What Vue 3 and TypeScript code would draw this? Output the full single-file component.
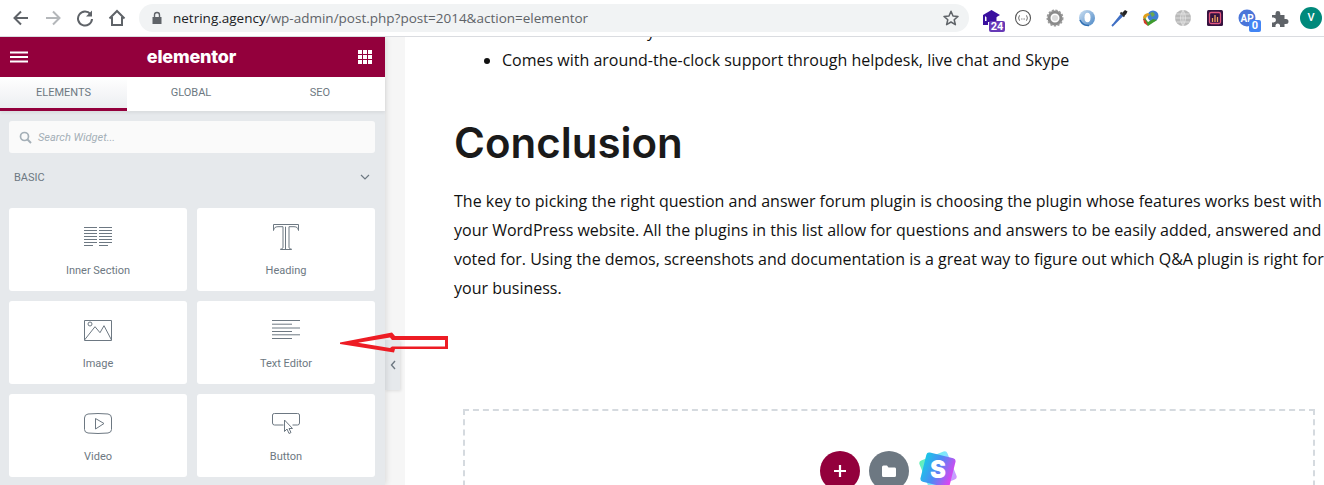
<script setup lang="ts">
interface Widget {
  title: string
  paths: string[]
}

const hLines = (ys: number[], x1: number, x2: number, shortEvery: number, shortX: number): string =>
  ys.map((y, i) => `M${x1} ${y}H${(i + 1) % shortEvery === 0 ? shortX : x2}`).join('')

const widgets: Widget[] = [
  {
    title: 'Inner Section',
    paths: [
      hLines([9.5, 12.5, 15.5, 18.5, 21.5, 24.5, 27.5], 4, 17, 7, 13),
      hLines([9.5, 12.5, 15.5, 18.5, 21.5, 24.5, 27.5], 19, 32, 7, 28),
    ],
  },
  {
    title: 'Heading',
    paths: [
      'M5.5 6.5H30.5V12.5C30 10 29 8.7 26 8.7H21V29C21 30.5 22 31 23.5 31V31.5H12.5V31C14 31 15 30.5 15 29V8.7H10C7 8.7 6 10 5.5 12.5Z',
      'M17.5 8.7V31',
    ],
  },
  {
    title: 'Image',
    paths: [
      'M4.5 9.5H31.5V29.5H4.5Z',
      'M4.5 29L15 15.7L20 21.7L24 14.7L31.5 29',
      'M12 13a2 2 0 1 1-4 0a2 2 0 1 1 4 0Z',
    ],
  },
  {
    title: 'Text Editor',
    paths: [hLines([9.5, 13.2, 17, 20.5, 23.8, 27.5], 4, 32, 2, 24)],
  },
  {
    title: 'Video',
    paths: [
      'M8 10Q18 9 28 10Q31.5 10.5 31.5 14V25.5Q31.5 28.5 28 29Q18 30 8 29Q4.5 28.5 4.5 25.5V14Q4.5 10.5 8 10Z',
      'M15.5 14.5L24 19.5L15.5 25Z',
    ],
  },
  {
    title: 'Button',
    paths: [
      'M15.5 21H6.5Q4.5 21 4.5 19V11Q4.5 9.5 6.5 9.5H29.5Q31.5 9.5 31.5 11V19Q31.5 21 29.5 21H24.5',
      'M16.5 16V27.5L19 25L21 29.5L23 28.5L21 24.5H24.5Z',
    ],
  },
]

const tabs = ['Elements', 'Global', 'SEO']
</script>

<template>
  <div class="page">
    <header class="toolbar">
      <button class="nav">
        <svg width="18" height="18" viewBox="0 0 18 18"><path d="M16 9H3M9 2.5L2.5 9L9 15.5" fill="none" stroke="#5f6368" stroke-width="2" /></svg>
      </button>
      <button class="nav">
        <svg width="18" height="18" viewBox="0 0 18 18"><path d="M2 9H15M9 2.5L15.5 9L9 15.5" fill="none" stroke="#b4b7ba" stroke-width="2" /></svg>
      </button>
      <button class="nav">
        <svg width="18" height="18" viewBox="0 0 18 18"><path d="M14.5 5.2A7 7 0 1 0 16 10" fill="none" stroke="#5f6368" stroke-width="2" /><path d="M16 1.5V7.5H10Z" fill="#5f6368" /></svg>
      </button>
      <button class="nav">
        <svg width="18" height="18" viewBox="0 0 18 18"><path d="M1.5 9.5L9 2L16.5 9.5M4 8V16H14V8" fill="none" stroke="#5f6368" stroke-width="2" /></svg>
      </button>
      <div class="omnibox">
        <svg class="lock" width="12" height="14" viewBox="0 0 12 14"><path d="M1.5 6H10.5V13H1.5Z" fill="#5f6368" /><path d="M3.5 6V4A2.5 2.5 0 0 1 8.5 4V6" fill="none" stroke="#5f6368" stroke-width="1.4" /></svg>
        <span class="url"><span class="host">netring.agency</span>/wp-admin/post.php?post=2014&amp;action=elementor</span>
        <svg class="star" width="18" height="18" viewBox="0 0 18 18"><path d="M9 2.2L11 7L16 7.4L12.2 10.7L13.4 15.7L9 13L4.6 15.7L5.8 10.7L2 7.4L7 7Z" fill="none" stroke="#5f6368" stroke-width="1.5" stroke-linejoin="round" /></svg>
      </div>

      <div class="ext">
        <svg width="32" height="32" viewBox="0 0 32 32">
          <path d="M8 13L16.5 8L25 13L16.5 18Z" fill="#3a109f" />
          <path d="M11.5 14H21.5V20H11.5Z" fill="#3a109f" />
          <path d="M8 13H10V19H13V23H8Z" fill="#3a109f" />
        </svg>
        <span class="ext-badge purple">24</span>
      </div>
      <div class="ext">
        <svg width="32" height="32" viewBox="0 0 32 32">
          <circle cx="16" cy="16" r="7.5" fill="#fff" stroke="#555" stroke-width="1.1" />
          <path d="M13 13.5Q11.8 13.5 12 15Q12 16 11.3 16Q12 16 12 17Q11.8 18.5 13 18.5M19 13.5Q20.2 13.5 20 15Q20 16 20.7 16Q20 16 20 17Q20.2 18.5 19 18.5" fill="none" stroke="#555" stroke-width=".8" />
          <path d="M14.3 17H15.1M15.7 17H16.5M17.1 17H17.9" stroke="#555" stroke-width=".9" />
        </svg>
      </div>
      <div class="ext">
        <svg width="32" height="32" viewBox="0 0 32 32">
          <circle cx="16" cy="16" r="6" fill="none" stroke="#8a8a8a" stroke-width="3" />
          <circle cx="16" cy="16" r="7.6" fill="none" stroke="#9a9a9a" stroke-width="1.8" stroke-dasharray="2.2 1.4" />
          <circle cx="16" cy="16" r="3" fill="#dcdcdc" />
        </svg>
      </div>
      <div class="ext">
        <svg width="32" height="32" viewBox="0 0 32 32">
          <defs>
            <linearGradient id="swirl" x1="0" y1="0" x2="1" y2="1"><stop offset="0" stop-color="#cfe2f3" /><stop offset="1" stop-color="#4a86c5" /></linearGradient>
          </defs>
          <circle cx="16" cy="16" r="8" fill="url(#swirl)" />
          <ellipse cx="16.5" cy="15.5" rx="3" ry="4.8" fill="#fff" />
          <path d="M9 18Q12 24 18 23.5" fill="none" stroke="#2f6fb3" stroke-width="1.5" />
        </svg>
      </div>
      <div class="ext">
        <svg width="32" height="32" viewBox="0 0 32 32">
          <path d="M10 23L9 24L19 14L18 13Z" fill="#3f6fc4" stroke="#3f6fc4" stroke-width="1.8" />
          <path d="M17.5 10.5L21.5 14.5" stroke="#333" stroke-width="2" />
          <path d="M19 11L22 8L24.5 9.5L23 12.5L21 13.5Z" fill="#222" />
        </svg>
      </div>
      <div class="ext">
        <svg width="32" height="32" viewBox="0 0 32 32">
          <circle cx="18" cy="14" r="5.5" fill="#3f7fd1" />
          <path d="M15 11L18 10L20 13L17 15Z" fill="#6aa84f" />
          <path d="M8 16Q8 12 13 11L15 13Q11 14 11 17Z" fill="#e1a11c" />
          <path d="M8 17L13 24L22 18L18 17L13 20L10 16Z" fill="#3f9b2d" />
          <path d="M8 16L9 21L13 24L11 19Z" fill="#d23b2a" />
        </svg>
      </div>
      <div class="ext">
        <svg width="32" height="32" viewBox="0 0 32 32">
          <circle cx="16" cy="16" r="8" fill="#b9b9b9" />
          <path d="M8 16H24M9.5 12H22.5M9.5 20H22.5M16 8V24M16 8Q11 16 16 24M16 8Q21 16 16 24" fill="none" stroke="#e6e6e6" stroke-width=".8" />
        </svg>
      </div>
      <div class="ext">
        <svg width="32" height="32" viewBox="0 0 32 32">
          <rect x="8" y="8" width="16" height="16" rx="1.5" fill="#35123f" />
          <rect x="10.5" y="10.5" width="11" height="11" rx="1.5" fill="none" stroke="#e2567f" stroke-width="1.3" />
          <path d="M13.5 20V16M16 20V13M18.5 20V15" stroke="#f2a15f" stroke-width="1.3" />
        </svg>
      </div>
      <div class="ext">
        <svg width="32" height="32" viewBox="0 0 32 32">
          <circle cx="16" cy="16" r="8.5" fill="#4a75d9" />
          <text x="16" y="19.5" text-anchor="middle" class="ap">AP</text>
        </svg>
        <span class="ext-badge blue">0</span>
      </div>
      <div class="ext">
        <svg width="32" height="32" viewBox="0 0 32 32">
          <path d="M9 13H12.5V11.5A2.4 2.4 0 0 1 17.3 11.5V13H21.5V17H23A2.4 2.4 0 0 1 23 22H21.5V25H17V23.2A2.3 2.3 0 0 0 12.5 23.2V25H9V20.5H10.5A2.5 2.5 0 0 0 10.5 15.5H9Z" fill="#5f6368" />
        </svg>
      </div>
      <div class="avatar">V</div>
    </header>

    <main class="main">
      <aside class="panel">
        <div class="brand">
          <svg width="18" height="12" viewBox="0 0 18 12"><path d="M0 1.5H18M0 6H18M0 10.5H18" stroke="#fff" stroke-width="2" /></svg>
          <span class="logo">elementor</span>
          <svg width="14" height="14" viewBox="0 0 14 14" fill="#fff">
            <rect x="0" y="0" width="4" height="4" /><rect x="5" y="0" width="4" height="4" /><rect x="10" y="0" width="4" height="4" />
            <rect x="0" y="5" width="4" height="4" /><rect x="5" y="5" width="4" height="4" /><rect x="10" y="5" width="4" height="4" />
            <rect x="0" y="10" width="4" height="4" /><rect x="5" y="10" width="4" height="4" /><rect x="10" y="10" width="4" height="4" />
          </svg>
        </div>
        <nav class="tabs">
          <div v-for="(tab, i) in tabs" :key="tab" class="tab" :class="{ active: i === 0 }">{{ tab }}</div>
        </nav>
        <div class="body">
          <div class="search">
            <svg width="13" height="13" viewBox="0 0 13 13"><circle cx="5.5" cy="5.5" r="4" fill="none" stroke="#a4afb7" stroke-width="1.7" /><path d="M8.5 8.5L12 12" stroke="#a4afb7" stroke-width="1.9" /></svg>
            <span>Search Widget...</span>
          </div>
          <div class="category">
            <span>BASIC</span>
            <svg width="10" height="6" viewBox="0 0 10 6"><path d="M1 1L5 5L9 1" fill="none" stroke="#6d7882" stroke-width="1.2" /></svg>
          </div>
          <div class="grid">
            <div v-for="w in widgets" :key="w.title" class="card">
              <svg class="icon" width="36" height="36" viewBox="0 0 36 36">
                <path v-for="(d, i) in w.paths" :key="i" :d="d" />
              </svg>
              <span class="card-title">{{ w.title }}</span>
            </div>
          </div>
        </div>
      </aside>

      <div class="strip">
        <div class="toggle">
          <svg width="6" height="10" viewBox="0 0 6 10"><path d="M5 1L1.5 5L5 9" fill="none" stroke="#6d7882" stroke-width="1.4" /></svg>
        </div>
      </div>

      <section class="content">
        <ul class="list">
          <li class="clipped">y</li>
          <li>Comes with around-the-clock support through helpdesk, live chat and Skype</li>
        </ul>
        <h2 class="heading">Conclusion</h2>
        <p class="para">The key to picking the right question and answer forum plugin is choosing the plugin whose features works best with your WordPress website. All the plugins in this list allow for questions and answers to be easily added, answered and voted for. Using the demos, screenshots and documentation is a great way to figure out which Q&amp;A plugin is right for your business.</p>
        <div class="dropzone">
          <div class="round add">
            <svg width="14" height="14" viewBox="0 0 14 14"><path d="M7 1V13M1 7H13" stroke="#fff" stroke-width="2.2" /></svg>
          </div>
          <div class="round folder">
            <svg width="16" height="14" viewBox="0 0 16 14"><path d="M1 3Q1 1.5 2.5 1.5H6L7.5 3.5H14Q15 3.5 15 5V11.5Q15 13 13.5 13H2.5Q1 13 1 11.5Z" fill="#fff" /></svg>
          </div>
          <div class="sk">
            <div class="sk-back"></div>
            <div class="sk-front"><span>S</span></div>
          </div>
        </div>
      </section>
    </main>

    <svg class="arrow" width="120" height="30" viewBox="0 0 120 30">
      <path fill-rule="evenodd" fill="#ed1c24" d="M0 12.5L52 2.5L55 6H108V19H55L54 22.5L0 14ZM18 12.7L50 18L52 16.5H105V10H52L50 7.5Z" />
    </svg>
  </div>
</template>

<style scoped>
.page {
  position: relative;
  width: 1324px;
  height: 485px;
  overflow: hidden;
  background: #fff;
  display: flex;
  flex-direction: column;
  font-family: Roboto, Arial, sans-serif;
}
.toolbar {
  flex: none;
  height: 36px;
  box-sizing: content-box;
  border-bottom: 1px solid #dadce0;
  display: flex;
  align-items: center;
  padding-left: 5px;
}
.nav {
  width: 32px;
  height: 32px;
  flex: none;
  padding: 0;
  border: 0;
  background: none;
  display: flex;
  align-items: center;
  justify-content: center;
}
.omnibox {
  flex: 1;
  height: 28px;
  margin: 0 6px;
  padding: 0 9px 0 12px;
  border-radius: 14px;
  background: #f1f3f4;
  display: flex;
  align-items: center;
}
.lock {
  flex: none;
}
.url {
  margin-left: 10px;
  flex: 1;
  font: 13.5px/28px "Open Sans", Arial, sans-serif;
  color: #5f6368;
  white-space: nowrap;
}
.host {
  color: #202124;
}
.ext {
  position: relative;
  flex: none;
  width: 32px;
  height: 32px;
}
.ext svg {
  display: block;
}
.ext-badge {
  position: absolute;
  font: 700 11px/11px Roboto, Arial, sans-serif;
  color: #fff;
  text-align: center;
  border-radius: 2px;
}
.purple {
  top: 19px;
  left: 14px;
  width: 16px;
  background: #673ab7;
}
.blue {
  top: 18px;
  left: 18px;
  width: 12px;
  line-height: 12px;
  background: #4285f4;
}
.ap {
  font: 700 10px Roboto, Arial, sans-serif;
  fill: #fff;
}
.avatar {
  flex: none;
  width: 22px;
  height: 22px;
  margin: 0 2px 0 5px;
  border-radius: 50%;
  background: #00897b;
  color: #fff;
  font: 500 11px/22px Roboto, Arial, sans-serif;
  text-align: center;
}
.main {
  flex: 1;
  min-height: 0;
  display: flex;
  overflow: hidden;
}
.panel {
  flex: none;
  width: 385px;
  background: #e6e9ec;
  box-shadow: 1px 0 6px rgba(0, 0, 0, 0.12);
  position: relative;
  z-index: 1;
}
.brand {
  height: 40px;
  padding: 0 13px 0 10px;
  background: #93003c;
  display: flex;
  align-items: center;
  justify-content: space-between;
}
.logo {
  font: 800 18px/20px Inter, Arial, sans-serif;
  letter-spacing: -0.2px;
  color: #fff;
  margin-right: 3px;
}
.tabs {
  height: 34px;
  background: #fff;
  display: grid;
  grid-template-columns: 127px 128px 130px;
  box-shadow: 0 2px 3px rgba(0, 0, 0, 0.06);
}
.tab {
  box-sizing: border-box;
  text-align: center;
  font-size: 11px;
  line-height: 31px;
  text-transform: uppercase;
  color: #6d7882;
}
.active {
  border-bottom: 3px solid #93003c;
  background: linear-gradient(#fff, #eceef1);
}
.body {
  padding: 10px 10px 0 9px;
}
.search {
  height: 32px;
  padding-left: 10px;
  border-radius: 3px;
  background: #fafafa;
  display: flex;
  align-items: center;
  gap: 6px;
  font-size: 11px;
  font-style: italic;
  color: #a4afb7;
}
.category {
  height: 48px;
  padding: 0 5px;
  display: flex;
  align-items: center;
  justify-content: space-between;
  font-size: 11px;
  color: #6d7882;
}
.grid {
  margin-top: 7px;
  display: grid;
  grid-template-columns: 178px 178px;
  gap: 10px;
}
.card {
  height: 83px;
  border-radius: 3px;
  background: #fff;
  display: flex;
  flex-direction: column;
  align-items: center;
  padding-top: 10px;
  box-sizing: border-box;
}
.icon {
  flex: none;
  fill: none;
  stroke: #6d7882;
  stroke-width: 1;
}
.card-title {
  margin-top: 10px;
  font-size: 11px;
  line-height: 14px;
  color: #6d7882;
}
.strip {
  flex: none;
  width: 20px;
  background: #f6f6f6;
}
.toggle {
  width: 15px;
  height: 50px;
  margin-top: 303px;
  background: #e6e9ec;
  box-shadow: 1px 1px 3px rgba(0, 0, 0, 0.1);
  display: flex;
  align-items: center;
  justify-content: center;
}
.content {
  flex: 1;
  min-width: 0;
  padding-left: 49px;
  font: 16px/29px "Open Sans", Arial, sans-serif;
  color: #111;
}
.list {
  margin: -20px 0 0;
  padding-left: 48px;
}
.clipped {
  list-style: none;
  padding-left: 145px;
}
.heading {
  margin: 44px 0 20px;
  font: 600 42px/48px Inter, Arial, sans-serif;
  color: #1a1a1a;
}
.para {
  margin: 0;
  width: 870px;
}
.dropzone {
  box-sizing: border-box;
  width: 852px;
  height: 200px;
  margin: 106px 0 0 9px;
  padding-top: 40px;
  border: 2px dashed #d5dadf;
  display: flex;
  justify-content: center;
  gap: 9px;
}
.round {
  width: 40px;
  height: 40px;
  border-radius: 50%;
  display: flex;
  align-items: center;
  justify-content: center;
}
.add {
  background: #93003c;
}
.folder {
  background: #6d7882;
}
.sk {
  position: relative;
  width: 40px;
  height: 38px;
}
.sk-back {
  position: absolute;
  inset: 4px 5px;
  background: linear-gradient(135deg, #5ef0b0, #7fe8ff 50%, #d88bff);
  transform: rotate(-22deg);
  border-radius: 3px;
}
.sk-front {
  position: absolute;
  inset: 4px 5px;
  background: linear-gradient(100deg, #18c9e6, #4c8bf5 45%, #ea3df0);
  transform: rotate(14deg);
  border-radius: 3px;
  display: flex;
  align-items: center;
  justify-content: center;
}
.sk-front span {
  transform: rotate(-14deg);
  font: 900 24px/24px Inter, Arial, sans-serif;
  color: #fff;
}
.arrow {
  position: absolute;
  left: 340px;
  top: 330px;
  z-index: 2;
}
</style>

<style>
html,
body {
  margin: 0;
  overflow: hidden;
}
</style>
